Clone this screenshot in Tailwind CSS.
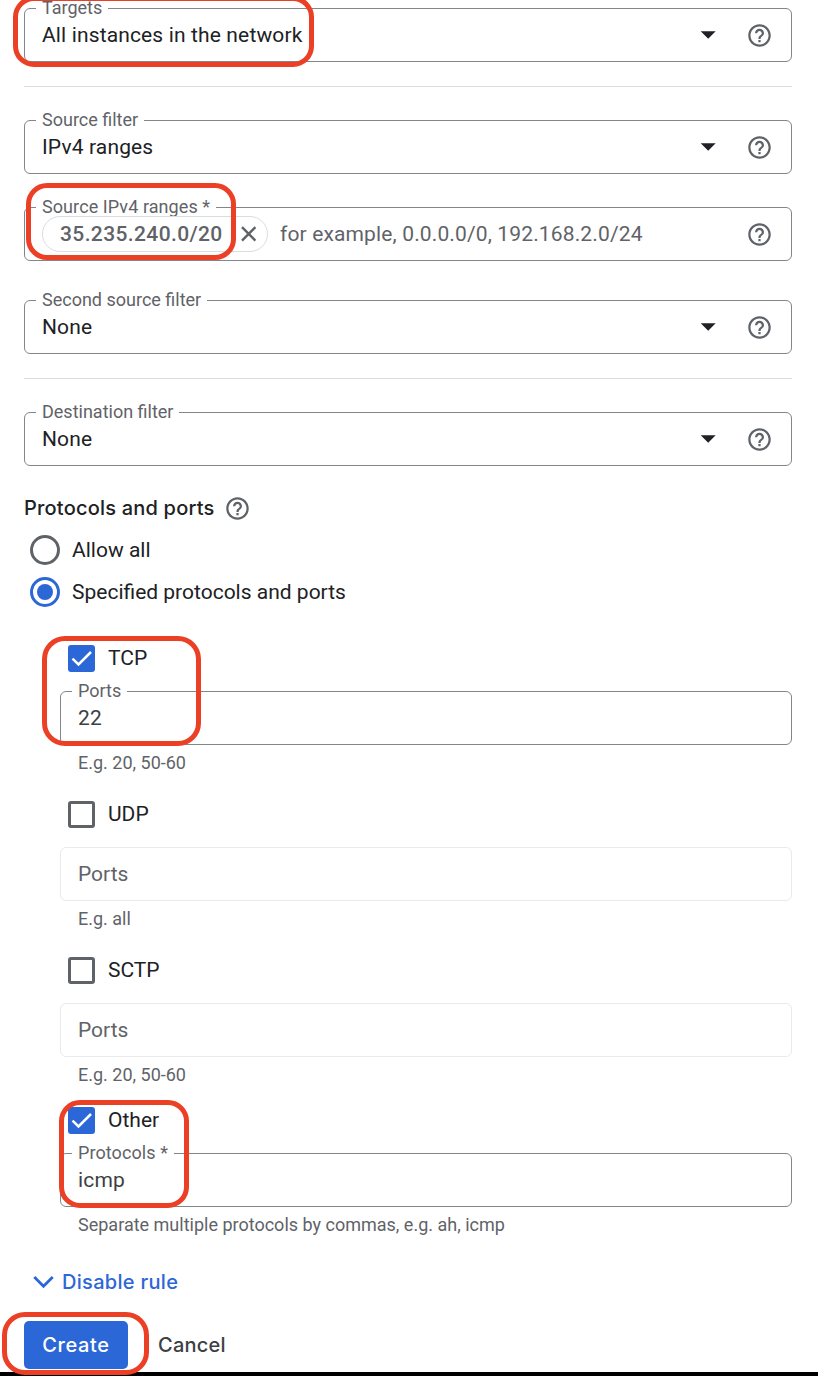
<!doctype html>
<html lang="en">

<head>
  <meta charset="utf-8">
  <meta name="viewport" content="width=device-width, initial-scale=1">
  <title>Create a firewall rule</title>
  <script src="https://cdn.jsdelivr.net/npm/@tailwindcss/browser@4"></script>
</head>

<body class="relative h-[1376px] overflow-hidden bg-white font-[Roboto,sans-serif] text-[21px] leading-6 text-[#202124]">
  <svg class="hidden">
    <symbol id="help" viewBox="0 0 24 24">
      <path d="M11 18h2v-2h-2v2zm1-16C6.48 2 2 6.48 2 12s4.48 10 10 10 10-4.48 10-10S17.52 2 12 2zm0 18c-4.41 0-8-3.59-8-8s3.59-8 8-8 8 3.59 8 8-3.59 8-8 8zm0-14c-2.21 0-4 1.79-4 4h2c0-1.1.9-2 2-2s2 .9 2 2c0 2-3 1.75-3 5h2c0-2.25 3-2.5 3-5 0-2.21-1.79-4-4-4z" />
    </symbol>
    <symbol id="arrow" viewBox="0 0 16 8">
      <path d="M.7.3h15L8.2 7.8z" />
    </symbol>
    <symbol id="check" viewBox="0 0 27 27">
      <path d="M4.5 13.7l6 5.8L23 7" fill="none" stroke="#fff" stroke-width="2.5" />
    </symbol>
  </svg>

  <main class="flex flex-col pt-2 pr-[26px] pl-6">
    <div class="relative flex h-[54px] items-center rounded-[6px] border border-[#80868b] pr-[18px] pl-[17px] tracking-[0.14px]">
      <span class="absolute -top-[11px] left-[11px] bg-white px-1.5 text-lg leading-5 tracking-normal text-[#5f6368]">Targets</span>
      <span class="grow">All instances in the network</span>
      <svg class="mr-[30px] h-2 w-4 fill-[#202124]"><use href="#arrow" /></svg>
      <svg class="size-[27px] fill-[#5f6368]"><use href="#help" /></svg>
    </div>

    <hr class="mt-6 border-[#dadce0]">

    <div class="relative mt-[33px] flex h-[54px] items-center rounded-[6px] border border-[#80868b] pr-[18px] pl-[17px] tracking-[0.14px]">
      <span class="absolute -top-[11px] left-[11px] bg-white px-1.5 text-lg leading-5 tracking-normal text-[#5f6368]">Source filter</span>
      <span class="grow">IPv4 ranges</span>
      <svg class="mr-[30px] h-2 w-4 fill-[#202124]"><use href="#arrow" /></svg>
      <svg class="size-[27px] fill-[#5f6368]"><use href="#help" /></svg>
    </div>

    <div class="relative mt-[33px] flex h-[54px] items-center rounded-[6px] border border-[#80868b] pr-[18px] pl-[17px] tracking-[0.14px]">
      <span class="absolute -top-[11px] left-[11px] h-[18px] bg-white px-1.5 text-lg leading-5 tracking-[0.08px] text-[#5f6368]">Source IPv4 ranges *</span>
      <span class="relative flex h-9 w-[226px] items-center justify-between rounded-full border border-[#dadce0] pr-[10px] pl-[17px] font-medium tracking-[0.38px] text-[#5f6368]">
        35.235.240.0/20
        <svg class="size-4" viewBox="0 0 16 16"><path d="M1 1.2l13.4 13.4M14.4 1.2L1 14.6" stroke="#5f6368" stroke-width="2.4" /></svg>
      </span>
      <span class="ml-3 grow text-[#5f6368]">for example, 0.0.0.0/0, 192.168.2.0/24</span>
      <svg class="size-[27px] fill-[#5f6368]"><use href="#help" /></svg>
    </div>

    <div class="relative mt-[39px] flex h-[54px] items-center rounded-[6px] border border-[#80868b] pr-[18px] pl-[17px] tracking-[0.14px]">
      <span class="absolute -top-[11px] left-[11px] bg-white px-1.5 text-lg leading-5 tracking-normal text-[#5f6368]">Second source filter</span>
      <span class="grow">None</span>
      <svg class="mr-[30px] h-2 w-4 fill-[#202124]"><use href="#arrow" /></svg>
      <svg class="size-[27px] fill-[#5f6368]"><use href="#help" /></svg>
    </div>

    <hr class="mt-6 border-[#dadce0]">

    <div class="relative mt-[33px] flex h-[54px] items-center rounded-[6px] border border-[#80868b] pr-[18px] pl-[17px] tracking-[0.14px]">
      <span class="absolute -top-[11px] left-[11px] bg-white px-1.5 text-lg leading-5 tracking-normal text-[#5f6368]">Destination filter</span>
      <span class="grow">None</span>
      <svg class="mr-[30px] h-2 w-4 fill-[#202124]"><use href="#arrow" /></svg>
      <svg class="size-[27px] fill-[#5f6368]"><use href="#help" /></svg>
    </div>

    <div class="mt-7 flex h-7 items-center">
      <h2 class="w-[200px] font-[Inter,sans-serif] text-[20px] font-medium tracking-[0.2px]">Protocols and ports</h2>
      <svg class="size-[27px] fill-[#5f6368]"><use href="#help" /></svg>
    </div>

    <div class="mt-[13px] flex h-[30px] items-center gap-3 pl-1.5">
      <span class="size-[30px] rounded-full border-3 border-[#5f6368]"></span>
      <span>Allow all</span>
    </div>
    <div class="mt-3 flex h-[30px] items-center gap-3 pl-1.5">
      <span class="flex size-[30px] items-center justify-center rounded-full border-3 border-[#2c67d8]"><span class="size-4 rounded-full bg-[#2c67d8]"></span></span>
      <span>Specified protocols and ports</span>
    </div>

    <div class="mt-[38px] flex flex-col pl-9">
      <div class="flex h-[27px] gap-[13px] pl-2">
        <svg class="size-[27px] rounded-[3px] bg-[#2c67d8]"><use href="#check" /></svg>
        <span class="leading-[26px]">TCP</span>
      </div>
      <div class="relative mt-[19px] flex h-[54px] items-center rounded-[6px] border border-[#80868b] pl-[17px] tracking-[0.14px] text-[#3c4043]">
        <span class="absolute -top-[11px] left-[11px] bg-white px-1.5 text-lg leading-5 tracking-normal text-[#5f6368]">Ports</span>
        22
      </div>
      <p class="mt-2 pl-[18px] text-lg leading-5 text-[#5f6368]">E.g. 20, 50-60</p>

      <div class="mt-7 flex h-[27px] gap-[13px] pl-2">
        <span class="size-[27px] rounded-[3px] border-3 border-[#5f6368]"></span>
        <span class="leading-[26px]">UDP</span>
      </div>
      <div class="mt-[19px] flex h-[54px] items-center rounded-[6px] border border-[#e8eaed] pl-[17px] text-[#5f6368]">Ports</div>
      <p class="mt-2 pl-[18px] text-lg leading-5 text-[#5f6368]">E.g. all</p>

      <div class="mt-7 flex h-[27px] gap-[13px] pl-2">
        <span class="size-[27px] rounded-[3px] border-3 border-[#5f6368]"></span>
        <span class="leading-[26px]">SCTP</span>
      </div>
      <div class="mt-[19px] flex h-[54px] items-center rounded-[6px] border border-[#e8eaed] pl-[17px] text-[#5f6368]">Ports</div>
      <p class="mt-2 pl-[18px] text-lg leading-5 text-[#5f6368]">E.g. 20, 50-60</p>

      <div class="mt-[22px] flex h-[27px] gap-[13px] pl-2">
        <svg class="size-[27px] rounded-[3px] bg-[#2c67d8]"><use href="#check" /></svg>
        <span class="leading-[26px]">Other</span>
      </div>
      <div class="relative mt-[19px] flex h-[54px] items-center rounded-[6px] border border-[#80868b] pl-[17px] tracking-[0.14px] text-[#3c4043]">
        <span class="absolute -top-[11px] left-[11px] bg-white px-1.5 text-lg leading-5 tracking-[0.08px] text-[#5f6368]">Protocols *</span>
        icmp
      </div>
      <p class="mt-2 pl-[18px] text-lg leading-5 text-[#5f6368]">Separate multiple protocols by commas, e.g. ah, icmp</p>
    </div>

    <div class="mt-[33px] flex h-7 items-center gap-2 pl-[9px] font-[Inter,sans-serif] text-[20px] font-medium tracking-[0.3px] text-[#2c67d8]">
      <svg class="h-[14px] w-[21px]" viewBox="0 0 21 14"><path d="M1.3 2l9.2 9.2L19.7 2" fill="none" stroke="#2c67d8" stroke-width="2.8" /></svg>
      Disable rule
    </div>

    <div class="mt-[25px] flex h-12 items-center gap-[30px] font-[Inter,sans-serif] text-[20px] font-medium">
      <button class="h-12 w-[104px] rounded-[5px] bg-[#2c67d8] tracking-[0.6px] text-white">Create</button>
      <span class="tracking-[0.25px] text-[#3c4043]">Cancel</span>
    </div>
  </main>

  <div class="absolute inset-x-0 bottom-0 h-1 bg-black"></div>

  <!-- highlight rings -->
  <div class="absolute -top-1 left-[13px] h-[71px] w-[301px] rounded-[21px] border-5 border-[#eb4026]"></div>
  <div class="absolute top-[183px] left-[26px] h-[77px] w-[210px] rounded-[21px] border-5 border-[#eb4026]"></div>
  <div class="absolute top-[636px] left-[42px] h-[110px] w-[159px] rounded-[23px] border-5 border-[#eb4026]"></div>
  <div class="absolute top-[1100px] left-[59px] h-[108px] w-[130px] rounded-[21px] border-5 border-[#eb4026]"></div>
  <div class="absolute top-[1312px] left-[2px] h-[63px] w-[147px] rounded-[23px] border-5 border-[#eb4026]"></div>
</body>

</html>
